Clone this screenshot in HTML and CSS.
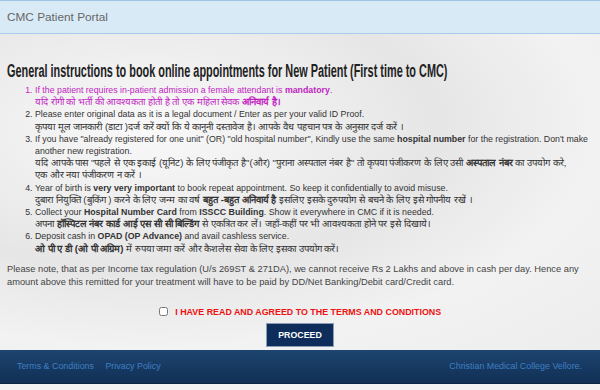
FILE: index.html
```html
<!DOCTYPE html>
<html lang="en">
<head>
  <meta charset="UTF-8">
  <title>CMC Patient Portal</title>
  <link rel="stylesheet" href="styles.css">
</head>
<body>

<div class="topbar">CMC Patient Portal</div>

<div class="content">
  <h2 class="title"><span>General instructions to book online appointments for New Patient (First time to CMC)</span></h2>

  <ol class="rules">
    <li class="pink">If the patient requires in-patient admission a female attendant is <b>mandatory</b>.<br>
      <span class="hi">यदि रोगी को भर्ती की आवश्यकता होती है तो एक महिला सेवक <b>अनिवार्य है।</b></span></li>
    <li>Please enter original data as it is a legal document / Enter as per your valid ID Proof.<br>
      <span class="hi">कृपया मूल जानकारी (डाटा )दर्ज करें क्यों कि ये कानूनी दस्तावेज है। आपके वैध पहचान पत्र के अनुसार दर्ज करें ।</span></li>
    <li>If you have "already registered for one unit" (OR) "old hospital number", Kindly use the same <b>hospital number</b> for the registration. Don't make another new registration.<br>
      <span class="hi">यदि आपके पास "पहले से एक इकाई (यूनिट) के लिए पंजीकृत है"(और) "पुराना अस्पताल नंबर है" तो कृपया पंजीकरण के लिए उसी <b>अस्पताल नंबर</b> का उपयोग करे,<br>एक और नया पंजीकरण न करें ।</span></li>
    <li>Year of birth is <b>very very important</b> to book repeat appointment. So keep it confidentially to avoid misuse.<br>
      <span class="hi">दुबारा नियुक्ति (बुकिंग ) करने के लिए जन्म का वर्ष <b>बहुत -बहुत अनिवार्य है</b> इसलिए इसके दुरुपयोग से बचने के लिए इसे गोपनीय रखें ।</span></li>
    <li>Collect your <b>Hospital Number Card</b> from <b>ISSCC Building</b>. Show it everywhere in CMC if it is needed.<br>
      <span class="hi">अपना <b>हॉस्पिटल नंबर कार्ड आई एस सी सी बिल्डिंग</b> से एकत्रित कर लें। जहाँ-कहीं पर भी आवश्यकता होने पर इसे दिखाये।</span></li>
    <li>Deposit cash in <b>OPAD (OP Advance)</b> and avail cashless service.<br>
      <span class="hi"><b>ओ पी ए डी (ओ पी अग्रिम)</b> में रुपया जमा करें और कैशलेस सेवा के लिए इसका उपयोग करें।</span></li>
  </ol>

  <p class="note">Please note, that as per Income tax regulation (U/s 269ST &amp; 271DA), we cannot receive Rs 2 Lakhs and above in cash per day. Hence any amount above this remitted for your treatment will have to be paid by DD/Net Banking/Debit card/Credit card.</p>

  <label class="agree"><input type="checkbox"> I HAVE READ AND AGREED TO THE TERMS AND CONDITIONS</label>

  <div class="actions">
    <button class="proceed">PROCEED</button>
  </div>
</div>

<footer class="footer">
  <div class="links">
    <a href="#">Terms &amp; Conditions</a>
    <a href="#">Privacy Policy</a>
  </div>
  <div class="org">Christian Medical College Vellore.</div>
</footer>

</body>
</html>
```

FILE: styles.css
```css
body {
  margin: 0;
  font-family: "Liberation Sans", Arial, sans-serif;
  font-size: 8.8px;
  color: #333;
  background: #f2f2f2;
}

.topbar {
  height: 32px;
  line-height: 32px;
  padding-left: 7px;
  background-color: #d9eaf7;
  border-top: 1px solid #9fc3e3;
  border-bottom: 1px solid #a9cbe9;
  color: #666;
  font-size: 11.8px;
}

.content {
  background: radial-gradient(ellipse at 25% 30%, #f9f9f9 0%, #e6e6e6 45%, #f2f2f2 70%, #ededed 100%);
  padding: 27px 7px 3px;
}

/* condensed heading: no narrow face installed, so squeeze a bold sans */
.title {
  margin: 0 0 3px;
  font-size: 18px;
  line-height: 20px;
  font-weight: bold;
  color: #222;
  white-space: nowrap;
  overflow: hidden;
}

.title span {
  display: inline-block;
  transform: scaleX(0.605);
  transform-origin: left center;
}

.rules {
  margin: 0;
  padding-left: 28px;
  line-height: 12.2px;
}

.rules .hi {
  font-size: 9.6px;
}

.rules .pink {
  color: #c21ec2;
}

.note {
  margin: 8px 0 0;
  font-size: 9.3px;
  line-height: 13px;
  color: #444;
}

.agree {
  display: block;
  text-align: center;
  margin-top: 17px;
  line-height: 12px;
  color: #ee1111;
  font-weight: bold;
  font-size: 8.9px;
}

.agree input {
  width: 9px;
  height: 9px;
  margin: 0 5px 0 0;
  vertical-align: -1px;
}

.actions {
  text-align: center;
  margin-top: 5px;
  line-height: 0;
}

.proceed {
  background-color: #0e2d5a;
  color: #fff;
  font-family: "Liberation Sans", Arial, sans-serif;
  font-weight: bold;
  font-size: 8.8px;
  border: 1px solid #8a9db5;
  padding: 0;
  width: 68px;
  height: 24px;
}

.footer {
  height: 33px;
  padding: 0 18px 0 17px;
  display: flex;
  justify-content: space-between;
  align-items: center;
  background: linear-gradient(#1d4570, #112f55);
  border-bottom: 1px solid #0c2444;
  font-size: 8.9px;
}

.footer a, .footer .org {
  color: #3f7fc2;
  text-decoration: none;
}

.footer .links a {
  margin-right: 9px;
}
```
